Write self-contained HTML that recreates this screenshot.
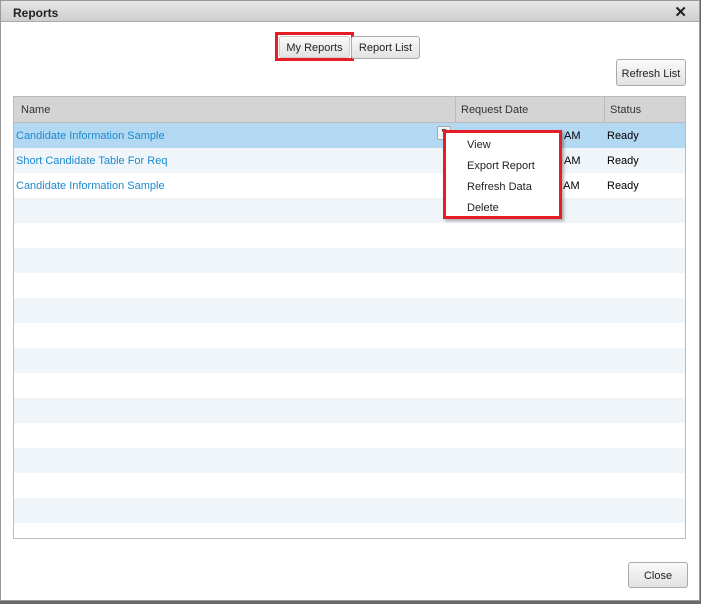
<!DOCTYPE html>
<html><head><style>
*{margin:0;padding:0;box-sizing:border-box}
body{width:701px;height:604px;background:#6a6a6a;font-family:"Liberation Sans",Arial,sans-serif;font-size:11px;position:relative;overflow:hidden}
.dlg{position:absolute;left:0;top:0;width:700px;height:601px;background:#fff;box-shadow:inset 0 0 0 1px #999}
.title{position:absolute;left:1px;top:1px;width:698px;height:21px;background:linear-gradient(#e6e6e6,#cfcfcf);border-bottom:1px solid #aaa;font-weight:bold;font-size:12px;color:#222;padding:5px 0 0 12px}
.x{position:absolute;right:12px;top:2px;font-size:15px;font-weight:bold}
.btn{position:absolute;border:1px solid #aaa;border-radius:3px;background:linear-gradient(#fafafa,#e2e2e2);color:#222;font-size:11px;text-align:center}
.red{position:absolute;border:3px solid #e81c24}
.tbl{position:absolute;left:13px;top:96px;width:673px;height:443px;border:1px solid #bbb;background:#fff;overflow:hidden}
.hd{position:absolute;left:0;top:0;width:100%;height:26px;background:#d4d4d4;border-bottom:1px solid #bbb;color:#333}
.hd span{position:absolute;top:7px}
.row{position:absolute;left:0;width:100%;height:25px}
.row span{position:absolute;top:7px}
.a{color:#1a8ad0}
.menu{position:absolute;left:443px;top:130px;width:119px;height:89px;border:3px solid #e81c24;background:#fff;box-shadow:2px 2px 3px rgba(0,0,0,.3)}
.menu div{position:absolute;left:21px;color:#222}
</style></head><body>
<div class="dlg">
<div class="title">Reports<span class="x">✕</span></div>
<div class="red" style="left:275px;top:32px;width:79px;height:29px"></div>
<div class="btn" style="left:279px;top:36px;width:71px;height:22px;padding-top:5px;border-color:#ccc">My Reports</div>
<div class="btn" style="left:351px;top:36px;width:69px;height:23px;padding-top:5px">Report List</div>
<div class="btn" style="left:616px;top:59px;width:70px;height:27px;padding-top:8px">Refresh List</div>
<div class="tbl">
<div class="hd"><span style="left:7px">Name</span><span style="left:447px">Request Date</span><span style="left:596px">Status</span>
<div style="position:absolute;left:441px;top:0;width:1px;height:26px;background:#bbb"></div>
<div style="position:absolute;left:590px;top:0;width:1px;height:26px;background:#bbb"></div></div>
<div class="row" style="top:26px;background:#b3d9f2"><span class="a" style="left:2px">Candidate Information Sample</span><span style="left:520px">10:29 AM</span><span style="left:593px">Ready</span>
<div style="position:absolute;left:423px;top:3px;width:14px;height:14px;border:1px solid #aaa;border-radius:2px;background:#f4f4f4;font-size:8px;text-align:center">▼</div></div>
<div class="row" style="top:51px;background:#f0f5f9"><span class="a" style="left:2px">Short Candidate Table For Req</span><span style="left:520px">10:23 AM</span><span style="left:593px">Ready</span></div>
<div class="row" style="top:76px"><span class="a" style="left:2px">Candidate Information Sample</span><span style="left:520px">10:11 AM</span><span style="left:593px">Ready</span></div>
<div class="row" style="top:101px;background:#f0f5f9"></div>
<div class="row" style="top:151px;background:#f0f5f9"></div>
<div class="row" style="top:201px;background:#f0f5f9"></div>
<div class="row" style="top:251px;background:#f0f5f9"></div>
<div class="row" style="top:301px;background:#f0f5f9"></div>
<div class="row" style="top:351px;background:#f0f5f9"></div>
<div class="row" style="top:401px;background:#f0f5f9"></div>
</div>
<div class="menu"><div style="top:6px">View</div><div style="top:27px">Export Report</div><div style="top:48px">Refresh Data</div><div style="top:69px">Delete</div></div>
<div class="btn" style="left:628px;top:562px;width:60px;height:26px;padding-top:7px">Close</div>
</div>
</body></html>
